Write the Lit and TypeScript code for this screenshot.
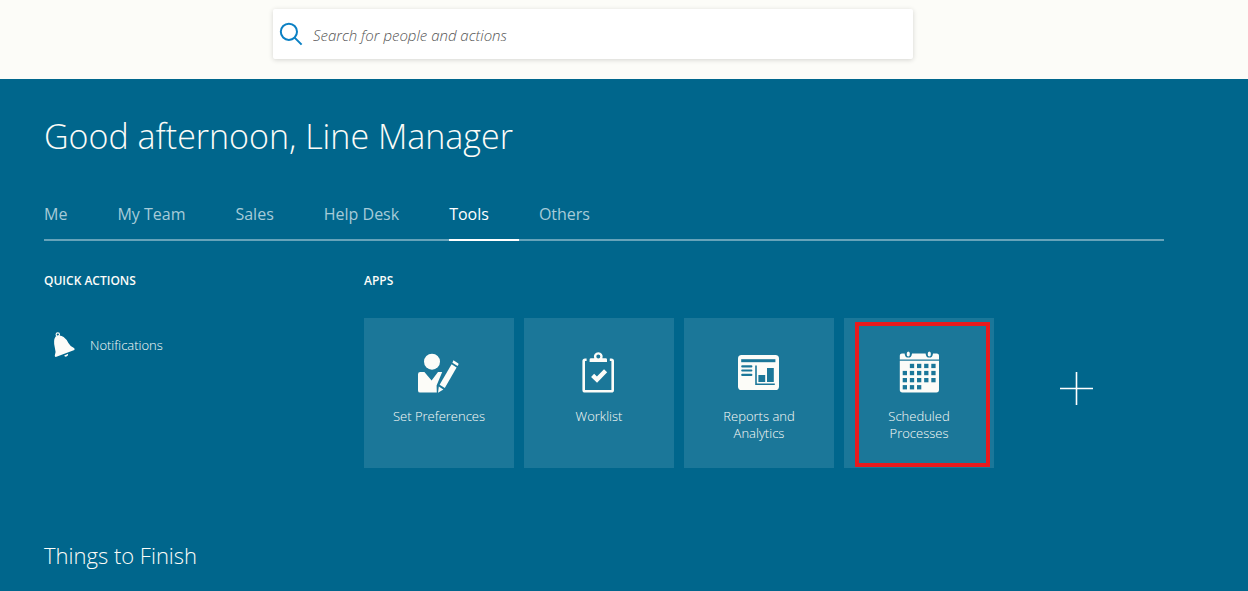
import { LitElement, html, css, svg, nothing } from "lit";
import { customElement, state } from "lit/decorators.js";
import { classMap } from "lit/directives/class-map.js";

const icons = {
  preferences: svg`
    <circle cx="14" cy="10.7" r="8" />
    <path d="M0 23.2Q0 21 2.2 21H6.4L13.6 29.6L20 21H24.2L18.6 34.4L18.8 41.6H2.2Q0 41.6 0 39.4Z" />
    <path d="M33.6 13.2L38.6 16.4L26.8 37L21.6 33.8Z" />
    <path d="M35.4 9.2L40.4 12.4Q40.8 13 40.2 14L39.6 15L34.4 11.8Z" />
    <path d="M20.8 35.6L25.4 38.6L20 41.8Z" />`,
  worklist: svg`
    <path d="M8.6 8.8H7Q5.7 8.8 5.7 10.1V39Q5.7 40.3 7 40.3H33.4Q34.7 40.3 34.7 39V10.1Q34.7 8.8 33.4 8.8H31.8" fill="none" stroke="currentColor" stroke-width="2.6" />
    <path fill-rule="evenodd" d="M11.6 11V8.6Q11.6 7.2 13 7.2H16.2A4.4 4.4 0 1 1 24.4 7.2H27.6Q29 7.2 29 8.6V11ZM20.3 3.4A2 2 0 1 0 20.3 7.4A2 2 0 1 0 20.3 3.4Z" />
    <path d="M14.6 24.4L19 28.6L27.6 19.8" fill="none" stroke="currentColor" stroke-width="4.4" />`,
  reports: svg`
    <rect x="0" y="4" width="41" height="35" rx="3.6" />
    <g fill="var(--tile)">
      <rect x="3.2" y="8.2" width="34.2" height="3" />
      <rect x="3.2" y="14.2" width="11.2" height="2.2" rx="1" />
      <rect x="3.2" y="18.4" width="11.2" height="2.2" rx="1" />
      <rect x="3.2" y="22.8" width="11.2" height="2.2" rx="1" />
      <path d="M17.2 14.4H18.8V32.4H36.8V34H17.2Z" />
      <rect x="20.4" y="24" width="6.8" height="7" />
      <rect x="29" y="17" width="6.8" height="14" />
    </g>`,
  calendar: svg`
    <path d="M1.8 8.6V4.6Q1.8 2.4 4 2.4H6.6Q7 6.6 10.3 6.6Q13.6 6.6 14 2.4H27.6Q28 6.6 31.3 6.6Q34.6 6.6 35 2.4H38.8Q41 2.4 41 4.6V8.6Z" />
    <ellipse cx="10.3" cy="3" rx="1.6" ry="2.5" />
    <ellipse cx="31.3" cy="3" rx="1.6" ry="2.5" />
    <path d="M1.8 9.8H41V38.8Q41 41.4 38.4 41.4H4.4Q1.8 41.4 1.8 38.8Z" />
    <g fill="var(--tile)">
      ${[0, 1, 2, 3].map((row) =>
        [0, 1, 2, 3, 4].map((col) =>
          (row === 0 && col === 0) || (row === 3 && col > 2)
            ? nothing
            : svg`<rect x=${4.7 + col * 7.15} y=${12.8 + row * 7.1} width="4.3" height="4.3" />`
        )
      )}
    </g>`,
};

const apps = [
  { lines: ["Set Preferences"], icon: icons.preferences, marked: false },
  { lines: ["Worklist"], icon: icons.worklist, marked: false },
  { lines: ["Reports and", "Analytics"], icon: icons.reports, marked: false },
  { lines: ["Scheduled", "Processes"], icon: icons.calendar, marked: true },
];

const tabs = ["Me", "My Team", "Sales", "Help Desk", "Tools", "Others"];

@customElement("app-tile")
export class AppTile extends LitElement {
  static properties = {
    lines: { attribute: false },
    icon: { attribute: false },
    marked: { type: Boolean },
  };
  declare lines: string[];
  declare icon: unknown;
  declare marked: boolean;

  static styles = css`
    :host {
      --tile: #1b7799;
      display: block;
      position: relative;
      width: 150px;
    }
    .tile {
      display: flex;
      flex-direction: column;
      align-items: center;
      gap: 15px;
      box-sizing: border-box;
      width: 100%;
      height: 150px;
      padding: 33px 0 0;
      border: 0;
      background: var(--tile);
      color: #fcfcf8;
      font: 300 13px/17px "Open Sans", sans-serif;
      text-align: center;
      cursor: pointer;
    }
    .icon {
      width: 42px;
      height: 42px;
      flex: none;
      fill: currentColor;
    }
    .line {
      display: block;
    }
    .mark {
      position: absolute;
      inset: 4px 4px 1px 11px;
      border: 4px solid #e81a1e;
      pointer-events: none;
    }
  `;

  render() {
    return html`
      <button class="tile">
        <svg class="icon" viewBox="0 0 42 42" aria-hidden="true">${this.icon}</svg>
        <span>${this.lines.map((line) => html`<span class="line">${line}</span>`)}</span>
      </button>
      ${this.marked ? html`<div class="mark"></div>` : nothing}
    `;
  }
}

@customElement("app-root")
export class AppRoot extends LitElement {
  @state() private active = "Tools";

  static styles = css`
    :host {
      display: flex;
      flex-direction: column;
      min-height: 100vh;
      background: #00668c;
      color: #fcfcf8;
      font-family: "Open Sans", sans-serif;
    }
    .top {
      display: flex;
      justify-content: center;
      padding: 9px 62px 20px 0;
      background: #fcfcf8;
    }
    .search {
      display: flex;
      align-items: center;
      gap: 10px;
      box-sizing: border-box;
      width: 640px;
      height: 50px;
      padding: 0 6px;
      border-radius: 2px;
      background: #fff;
      box-shadow: 0 1px 5px rgba(0, 0, 0, 0.16);
    }
    .search svg {
      width: 24px;
      height: 24px;
      flex: none;
      fill: none;
      stroke: #0b80c4;
      stroke-width: 2;
    }
    .search input {
      flex: 1;
      min-width: 0;
      padding: 2px 0 0;
      border: 0;
      outline: 0;
      background: none;
      color: #444;
      font: italic 300 15px/24px "Open Sans", sans-serif;
    }
    .search input::placeholder {
      color: #555;
      opacity: 1;
    }
    main {
      padding: 32px 84px 20px 44px;
    }
    h1,
    h2,
    h3 {
      margin: 0;
    }
    h1 {
      font-size: 34px;
      font-weight: 300;
      line-height: 50px;
    }
    .tabs {
      display: flex;
      gap: 20px;
      margin-top: 39px;
      border-bottom: 2px solid #66a3ba;
    }
    .tab {
      margin-bottom: -2px;
      padding: 0 30px 11px 0;
      border: 0;
      border-bottom: 2px solid transparent;
      background: none;
      color: #a6cbd8;
      font: 400 16px/28px "Open Sans", sans-serif;
      cursor: pointer;
    }
    .tab.active {
      border-color: #fff;
      color: #fff;
    }
    .columns {
      display: grid;
      grid-template-columns: 320px 1fr;
      margin-top: 30px;
    }
    h3 {
      font-size: 12px;
      font-weight: 600;
      line-height: 20px;
    }
    .action {
      display: flex;
      align-items: center;
      gap: 14px;
      margin-top: 40px;
      padding-left: 8px;
      color: inherit;
      font-size: 13px;
      font-weight: 300;
      line-height: 28px;
      text-decoration: none;
    }
    .action svg {
      width: 24px;
      height: 28px;
      fill: currentColor;
    }
    .apps {
      display: flex;
      gap: 10px;
      margin-top: 27px;
    }
    .add {
      display: grid;
      place-items: center;
      width: 145px;
      height: 141px;
      padding: 0;
      border: 0;
      background: none;
      color: #fff;
      cursor: pointer;
    }
    .add svg {
      width: 33px;
      height: 33px;
      stroke: currentColor;
      stroke-width: 1.6;
    }
    h2 {
      margin-top: 71px;
      font-size: 22px;
      font-weight: 300;
      line-height: 32px;
    }
  `;

  render() {
    return html`
      <header class="top">
        <label class="search">
          <svg viewBox="0 0 24 24" aria-hidden="true">
            <circle cx="9.9" cy="9.8" r="8.1" />
            <path d="M15.6 15.6L22.6 22.6" />
          </svg>
          <input type="search" aria-label="Search" placeholder="Search for people and actions" />
        </label>
      </header>
      <main>
        <h1>Good afternoon, Line Manager</h1>
        <div class="tabs" role="tablist">
          ${tabs.map(
            (name) => html`<button
              role="tab"
              class=${classMap({ tab: true, active: name === this.active })}
              aria-selected=${name === this.active ? "true" : "false"}
              @click=${() => (this.active = name)}
            >${name}</button>`
          )}
        </div>
        <div class="columns">
          <section>
            <h3>QUICK ACTIONS</h3>
            <a class="action" href="#notifications">
              <svg viewBox="0 0 24 28" aria-hidden="true">
                <circle cx="5.8" cy="3.6" r="1.7" fill="none" stroke="currentColor" stroke-width="1.1" />
                <path d="M3.6 5.6Q8 3.2 11.6 6Q14.6 8.2 16.4 12Q18 15 21.6 16.8Q23.2 17.6 22.4 19L4.4 25.8Q2.6 26.2 2.8 24.6Q4.2 20.6 2.8 16.6Q1 9.4 3.6 5.6Z" />
                <path d="M12.2 24.4L16.2 22.8Q16.4 25 14.4 25.6Q12.8 25.8 12.2 24.4Z" />
              </svg>
              <span>Notifications</span>
            </a>
          </section>
          <section>
            <h3>APPS</h3>
            <div class="apps">
              ${apps.map(
                (app) => html`<app-tile .lines=${app.lines} .icon=${app.icon} ?marked=${app.marked}></app-tile>`
              )}
              <button class="add" aria-label="Add app">
                <svg viewBox="0 0 33 33" aria-hidden="true"><path d="M16.5 0V33M0 16.5H33" /></svg>
              </button>
            </div>
          </section>
        </div>
        <h2>Things to Finish</h2>
      </main>
    `;
  }
}
